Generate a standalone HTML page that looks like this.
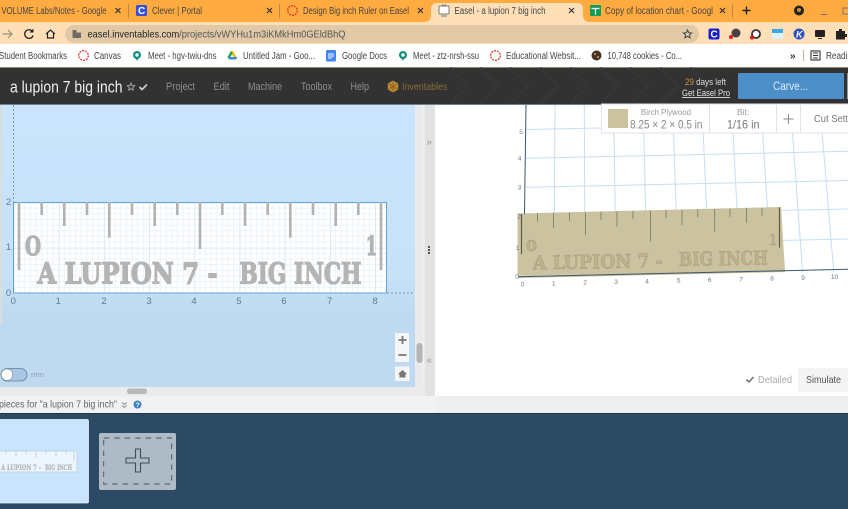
<!DOCTYPE html>
<html><head><meta charset="utf-8"><style>
html,body{margin:0;padding:0;width:848px;height:509px;overflow:hidden;background:#fff}
svg{display:block;font-family:"Liberation Sans",sans-serif;filter:blur(.3px)}
.t{font-size:9.8px;fill:#444}
.x{stroke:#333;stroke-width:1.2;fill:none}
.n{font-size:9.500px;fill:#5d7b98}
.g{stroke:#c8def2;stroke-width:1;fill:none}
.m{font-size:10.800px;fill:#8e8e8e}
.r{font-family:"DejaVu Serif","Liberation Serif",serif;font-weight:bold;fill:#b4b4b4;stroke:#b4b4b4;stroke-width:1.300}
</style></head><body>
<svg width="848" height="509" viewBox="0 0 848 509" xmlns="http://www.w3.org/2000/svg">
<defs>
<pattern id="gr" x="13.5" y="202.5" width="45.2" height="45.2" patternUnits="userSpaceOnUse">
<rect width="45.2" height="45.2" fill="#fff"/>
<path d="M5.65 0V45.2M11.3 0V45.2M16.95 0V45.2M22.6 0V45.2M28.25 0V45.2M33.9 0V45.2M39.55 0V45.2M0 5.65H45.2M0 11.3H45.2M0 16.95H45.2M0 22.6H45.2M0 28.25H45.2M0 33.9H45.2M0 39.55H45.2" stroke="#e8f1f9" stroke-width=".8" fill="none"/>
<path d="M.4 0V45.2M0 .4H45.2" stroke="#d6e7f6" stroke-width="1" fill="none"/>
</pattern>
<linearGradient id="bg" x1="0" y1="0" x2="0" y2="1"><stop offset="0" stop-color="#c9e4fc"/><stop offset=".6" stop-color="#c7e1f9"/><stop offset=".75" stop-color="#bfd9f1"/><stop offset="1" stop-color="#bfd9f1"/></linearGradient>
</defs>

<!-- chrome tabs -->
<rect width="848" height="23" fill="#ffab40"/>
<rect y="22" width="848" height="22" fill="#ffdfb8"/>
<path d="M424 22q7 0 7-7V9q0-6 6-6H577q6 0 6 6v6q0 7 7 7Z" fill="#ffdfb8"/>
<text class="t" x="1.5" y="13.8" textLength="105" lengthAdjust="spacingAndGlyphs">VOLUME Labs/Notes - Google</text>
<path class="x" d="M115.5 8l5 5m0-5l-5 5"/>
<rect x="128" y="4" width="1" height="14" fill="#b98a45"/>
<rect x="136" y="5" width="11" height="11" rx="1.5" fill="#3452e1"/>
<text x="138" y="14.2" font-size="10" font-weight="bold" fill="#fff">C</text>
<text class="t" x="152" y="13.8" textLength="50" lengthAdjust="spacingAndGlyphs">Clever | Portal</text>
<path class="x" d="M267 8l5 5m0-5l-5 5"/>
<rect x="279" y="4" width="1" height="14" fill="#b98a45"/>
<circle cx="292.500" cy="10.500" r="4.800" fill="none" stroke="#e4332d" stroke-width="1.300" stroke-dasharray="2 1"/>
<text class="t" x="303" y="13.800" textLength="106" lengthAdjust="spacingAndGlyphs">Design Big inch Ruler on Easel</text>
<path class="x" d="M418 8l5 5m0-5l-5 5"/>
<rect x="439" y="6" width="10" height="8" rx="1" fill="#fff" stroke="#777" stroke-width="1"/>
<path d="M441 16h6M442 4.500l2 1.500 2-1.500" stroke="#777" stroke-width="1" fill="none"/>
<text class="t" x="454.500" y="13.800" textLength="91" lengthAdjust="spacingAndGlyphs">Easel - a lupion 7 big inch</text>
<path class="x" d="M569 8l5 5m0-5l-5 5"/>
<rect x="590" y="5" width="11" height="11" rx="1" fill="#0f9d58"/>
<path d="M591.500 8.500h8M595.500 8.500v6" stroke="#fff" stroke-width="1.200"/>
<text class="t" x="605" y="13.800" textLength="108" lengthAdjust="spacingAndGlyphs">Copy of location chart - Googl</text>
<path class="x" d="M720 8l5 5m0-5l-5 5"/>
<rect x="732" y="4" width="1" height="14" fill="#b98a45"/>
<path d="M746.500 6.500v8M742.500 10.500h8" stroke="#222" stroke-width="1.400"/>
<circle cx="799" cy="10.500" r="5" fill="#222"/><circle cx="799" cy="10" r="2" fill="#c9913d"/>
<rect x="821" y="14" width="6" height="1" fill="#777"/>
<rect x="843" y="8" width="6" height="6" fill="none" stroke="#777"/>

<!-- toolbar -->
<path d="M2.500 34h9M8 30l4 4-4 4" stroke="#9a8f80" stroke-width="1.200" fill="none"/>
<path d="M32.500 31.500a4.300 4.300 0 1 0 .6 4" stroke="#222" stroke-width="1.300" fill="none"/><path d="M33.500 28.500v4h-4z" fill="#222"/>
<path d="M46 34l4.500-4 4.500 4M47.500 33v5h6v-5" stroke="#222" stroke-width="1.200" fill="none"/>
<rect x="65" y="25" width="634" height="18" rx="9" fill="#e1c9a7"/>
<path d="M72.500 30h4v8h-4zM76.500 32.500h4.500v5.500h-4.500z" fill="#6f6a62"/>
<text x="87.500" y="37.500" font-size="10.400" fill="#555" textLength="258" lengthAdjust="spacingAndGlyphs"><tspan fill="#222">easel.inventables.com</tspan>/projects/vWYHu1m3iKMkHm0GEldBhQ</text>
<path d="M687.500 30l1.200 2.700 2.900.3-2.200 1.900.7 2.900-2.600-1.500-2.600 1.500.7-2.900-2.200-1.900 2.900-.3z" fill="none" stroke="#444" stroke-width="1"/>
<rect x="708.500" y="28.500" width="11" height="11" rx="2" fill="#1a1fd0"/><text x="710.500" y="37.700" font-size="10" font-weight="bold" fill="#fff">C</text>
<circle cx="736" cy="33" r="4.500" fill="#4a4146"/><circle cx="731" cy="37" r="2" fill="#e8141c"/>
<circle cx="756" cy="34" r="4" fill="#fff" stroke="#333" stroke-width="1.800"/><circle cx="752" cy="37.500" r="2" fill="#e8141c"/>
<rect x="772" y="29" width="11" height="10" fill="#38a9ea"/><rect x="772" y="33" width="11" height="6" fill="#dff1fb"/>
<circle cx="799" cy="34" r="5.500" fill="#2b4fc4"/><text x="796" y="37.500" font-size="9" font-weight="bold" font-style="italic" fill="#fff">K</text>
<rect x="815" y="30" width="10" height="7" rx="1" fill="#222"/><path d="M818 38.500h4" stroke="#222" stroke-width="1"/>
<path d="M836 31h3v-2h3v2h3v3h2v3h-2v2.500h-9z" fill="#222"/>

<!-- bookmarks -->
<text class="t" x="-1" y="58.800" textLength="68" lengthAdjust="spacingAndGlyphs">Student Bookmarks</text>
<circle cx="83.500" cy="55.500" r="4.800" fill="none" stroke="#e4332d" stroke-width="1.300" stroke-dasharray="2 1"/>
<text class="t" x="94" y="58.800" textLength="27" lengthAdjust="spacingAndGlyphs">Canvas</text>
<circle cx="137" cy="55" r="4" fill="#0e8f80"/><circle cx="137" cy="55" r="1.700" fill="#fff"/><path d="M135.500 58l1.500 3 1.500-3z" fill="#0e8f80"/>
<text class="t" x="148" y="58.800" textLength="68.500" lengthAdjust="spacingAndGlyphs">Meet - hgv-twiu-dns</text>
<path d="M230 51l3 0 3.500 6-1.500 2.500z" fill="#fbbc04"/><path d="M231 51l-3.500 6 1.500 2.500 3.500-6z" fill="#1fa463"/><path d="M229 59.500h7l1.500-2.500h-7z" fill="#4285f4"/>
<text class="t" x="243" y="58.800" textLength="72" lengthAdjust="spacingAndGlyphs">Untitled Jam - Goo...</text>
<rect x="326" y="50" width="10" height="11.500" rx="1" fill="#4285f4"/><path d="M328 54h6M328 56h6M328 58h4" stroke="#fff" stroke-width="1"/>
<text class="t" x="342" y="58.800" textLength="45" lengthAdjust="spacingAndGlyphs">Google Docs</text>
<circle cx="403" cy="55" r="4" fill="#0e8f80"/><circle cx="403" cy="55" r="1.700" fill="#fff"/><path d="M401.500 58l1.500 3 1.500-3z" fill="#0e8f80"/>
<text class="t" x="413" y="58.800" textLength="66" lengthAdjust="spacingAndGlyphs">Meet - ztz-nrsh-ssu</text>
<circle cx="495.500" cy="55.500" r="4.800" fill="none" stroke="#e4332d" stroke-width="1.300" stroke-dasharray="2 1"/>
<text class="t" x="506" y="58.800" textLength="75" lengthAdjust="spacingAndGlyphs">Educational Websit...</text>
<circle cx="596.500" cy="55.500" r="5" fill="#4b3322"/><circle cx="595" cy="54" r="1" fill="#d2a679"/><circle cx="598" cy="57" r="1" fill="#d2a679"/>
<text class="t" x="607.500" y="58.800" textLength="74.500" lengthAdjust="spacingAndGlyphs">10,748 cookies - Co...</text>
<text x="790" y="59" font-size="10" font-weight="bold" fill="#333">»</text>
<rect x="803" y="50" width="1" height="11" fill="#c9b391"/>
<rect x="811" y="51" width="9" height="9" fill="none" stroke="#333" stroke-width="1.100"/><path d="M813 53h5M813 55.500h5M813 58h5" stroke="#333" stroke-width=".9"/>
<text class="t" x="826" y="58.800" textLength="26" lengthAdjust="spacingAndGlyphs">Readin</text>

<!-- app header -->
<rect y="67" width="848" height="1" fill="#8d8578"/>
<rect y="68" width="848" height="36" fill="#323232"/>
<path d="M450 68l18 18-18 18M480 68l18 18-18 18M510 68l18 18-18 18M540 68l18 18-18 18M570 68l18 18-18 18M600 68l18 18-18 18M630 68l18 18-18 18M660 68l18 18-18 18M690 68l18 18-18 18" stroke="#363636" stroke-width="3" fill="none"/>
<text x="10" y="92.500" font-size="16.500" fill="#f0f0f0" textLength="112.500" lengthAdjust="spacingAndGlyphs">a lupion 7 big inch</text>
<path d="M131 83l1 2.500 2.700.2-2 1.800.6 2.600-2.300-1.400-2.300 1.400.6-2.600-2-1.800 2.700-.2z" fill="none" stroke="#aaa" stroke-width=".9"/>
<path d="M139.500 87l2.500 2.500 5-5" fill="none" stroke="#ccc" stroke-width="1.700"/>
<text class="m" x="166" y="90" textLength="29" lengthAdjust="spacingAndGlyphs">Project</text>
<text class="m" x="213.500" y="90" textLength="16" lengthAdjust="spacingAndGlyphs">Edit</text>
<text class="m" x="248" y="90" textLength="34" lengthAdjust="spacingAndGlyphs">Machine</text>
<text class="m" x="301" y="90" textLength="31" lengthAdjust="spacingAndGlyphs">Toolbox</text>
<text class="m" x="350.500" y="90" textLength="18.500" lengthAdjust="spacingAndGlyphs">Help</text>
<path d="M393 81l4.800 2.800v5.400l-4.800 2.800-4.800-2.800v-5.400z" fill="#b5842d" stroke="#d09a3b" stroke-width=".8"/><path d="M393 81v11M388.500 84l9 5M397.500 84l-9 5" stroke="#7b5a20" stroke-width=".6"/>
<text x="402" y="90" font-size="10.500" fill="#8a6c38" textLength="45.500" lengthAdjust="spacingAndGlyphs">Inventables</text>
<text x="685" y="85" font-size="8.800" fill="#ddd" textLength="41" lengthAdjust="spacingAndGlyphs"><tspan fill="#d09a3b">29</tspan> days left</text>
<text x="682" y="96" font-size="8.800" fill="#e4e4e4" text-decoration="underline" textLength="48" lengthAdjust="spacingAndGlyphs">Get Easel Pro</text>
<rect x="738" y="73" width="106" height="26" rx="1" fill="#4b8ec8"/>
<text x="773" y="90" font-size="11.500" fill="#dcebf7" textLength="35" lengthAdjust="spacingAndGlyphs">Carve...</text>
<rect x="847" y="73" width="1" height="26" fill="#999"/>
<rect y="104" width="848" height="1" fill="#6d8193"/>

<!-- left 2D panel -->
<rect x="0" y="105" width="415" height="282" fill="url(#bg)"/>
<rect x="0" y="105" width="2" height="218" fill="#dcdcdc"/>
<rect x="415" y="105" width="9" height="282" fill="#ebebed"/>
<rect x="424" y="105" width="11" height="291" fill="#e2e2e2"/>
<rect x="423.500" y="105" width="1" height="291" fill="#f4f4f4"/>
<rect x="0" y="387" width="424" height="9" fill="#ebebed"/>
<path d="M13.500 105V202" stroke="#6d9cc6" stroke-width="1" stroke-dasharray="2 2"/>
<path d="M387 293H415" stroke="#6d9cc6" stroke-width="1" stroke-dasharray="2 2"/>
<rect x="13.500" y="202.500" width="373" height="90.500" fill="url(#gr)" stroke="#63a3da" stroke-width="1"/>
<path d="M19 202v68M41.700 202v13M64.300 202v24M87 202v13M109.300 202v35.500M132 202v13M154.700 202v24M177.300 202v13M200 202v47M222.300 202v13M245 202v24M267.700 202v13M290.300 202v35.500M313 202v13M335.700 202v24M358.300 202v13M381 202v68" stroke="#b3b3b3" stroke-width="2.700" fill="none"/>
<text class="r" x="25" y="255" font-size="26" textLength="16" lengthAdjust="spacingAndGlyphs">O</text>
<text class="r" x="366" y="255" font-size="26" textLength="11" lengthAdjust="spacingAndGlyphs">1</text>
<text class="r" x="37.500" y="283.500" font-size="29" textLength="180" lengthAdjust="spacingAndGlyphs">A LUPION 7 -</text>
<text class="r" x="239.500" y="283.500" font-size="29" textLength="122" lengthAdjust="spacingAndGlyphs">BIG INCH</text>
<g class="n" text-anchor="middle">
<text x="13.300" y="304">0</text><text x="58.300" y="304">1</text><text x="104" y="304">2</text><text x="149" y="304">3</text><text x="194" y="304">4</text><text x="239" y="304">5</text><text x="284" y="304">6</text><text x="329.700" y="304">7</text><text x="375" y="304">8</text>
<text x="8.500" y="205">2</text><text x="8.500" y="250">1</text><text x="8.500" y="296">0</text>
</g>
<rect x="428" y="246" width="2" height="2" fill="#555"/><rect x="428" y="249" width="2" height="2" fill="#555"/><rect x="428" y="252" width="2" height="2" fill="#555"/>
<text x="426.500" y="145" font-size="10" fill="#999">»</text>
<text x="426.500" y="363" font-size="10" fill="#999">«</text>
<rect x="416.500" y="343" width="6" height="20" rx="3" fill="#b5b5b5"/>
<rect x="127" y="388.500" width="20" height="5.500" rx="2.700" fill="#b8b8b8"/>
<rect x="395" y="333" width="14" height="29" fill="#f4f6f8"/>
<path d="M398.500 340h8M402.500 336v8M398.500 355h8" stroke="#777" stroke-width="1.800"/>
<rect x="395" y="366.500" width="14.500" height="14.500" fill="#f4f6f8"/>
<path d="M402.500 370l-4.500 4h1.500v3.500h6V374h1.500z" fill="#777"/>
<rect x="1" y="368.500" width="26" height="12.500" rx="6.200" fill="#a9c7e2" stroke="#5f7f9e" stroke-width=".8"/>
<circle cx="7" cy="374.700" r="5.800" fill="#fff" stroke="#6a7f92" stroke-width=".6"/>
<text x="31" y="377" font-size="7.500" fill="#8fa0ae" textLength="13" lengthAdjust="spacingAndGlyphs">mm</text>

<!-- right 3D view -->
<path d="M555 105L553.800 272M584.300 105L584.900 272M613.700 105L616 272M643.200 105L647.100 272M672.600 105L678.200 272M702 105L709.300 272M731.500 105L740.400 272M760.900 105L771.500 272M790.400 105L802.600 272M819.800 105L833.700 272M849 105L864.800 272" class="g"/>
<path d="M526 129.500L848 123M526 158.300L848 151.300M526 187.300L848 180.500M526 216L848 209M526 246L848 239" class="g"/>
<polygon points="517.500,213.500 781,207 785,270.700 517.500,275.700" fill="#cbc2a0"/>
<path d="M518 277L785 271" stroke="#c4b993" stroke-width="2"/>
<path d="M526 105L524.500 214M518 276.700L848 269.300" stroke="#3c5870" stroke-width="1" fill="none"/>
<g stroke="#7d7661" fill="none" stroke-width=".8">
<path d="M521.500 214v40" stroke-width="1.200" stroke="#5f5948"/><path d="M537.500 213.500v8M553.500 213v15M569.500 212.700v8M585.500 212.300v23M601 212v8M617 211.500v15M633 211v8M650.500 210.500v31M666 210v8M682 210v15M697.800 209.500v8M714.700 209v23M730 208.700v8M746.500 208v15M762 208v8"/><path d="M779.500 207.500v40" stroke-width="1.200" stroke="#5f5948"/>
</g>
<g font-family="'DejaVu Serif','Liberation Serif',serif" font-weight="bold" fill="#bcb28e" stroke="#a59c7c" stroke-width=".5">
<text x="526" y="251" font-size="15" textLength="11" lengthAdjust="spacingAndGlyphs">0</text>
<text x="769" y="245" font-size="15" textLength="8" lengthAdjust="spacingAndGlyphs">1</text>
<text x="533" y="269.500" font-size="19" textLength="130" lengthAdjust="spacingAndGlyphs" transform="rotate(-1 533 269)">A LUPION 7 -</text>
<text x="679" y="266" font-size="19" textLength="89" lengthAdjust="spacingAndGlyphs" transform="rotate(-1 679 266)">BIG INCH</text>
</g>
<g font-size="6.500" fill="#66798a" text-anchor="middle">
<text x="521" y="134">5</text><text x="519.500" y="160.500">4</text><text x="519.500" y="189.500">3</text><text x="519" y="218.500">2</text><text x="517.500" y="250">1</text><text x="517" y="279">0</text>
<text x="522.700" y="286.500">0</text><text x="553.700" y="285.500">1</text><text x="585" y="284.500">2</text><text x="616" y="284">3</text><text x="647" y="283.500">4</text><text x="678.700" y="282.500">5</text><text x="709.700" y="282">6</text><text x="741" y="281.500">7</text><text x="772" y="280.500">8</text><text x="803" y="280">9</text><text x="834.500" y="279">10</text>
</g>
<!-- material toolbar -->
<rect x="601.500" y="104" width="247" height="29" fill="#fff" stroke="#e2e2e2"/>
<rect x="608" y="109" width="20" height="19" fill="#cbc2a0"/>
<text x="641" y="115" font-size="8.500" fill="#999" textLength="50" lengthAdjust="spacingAndGlyphs">Birch Plywood</text>
<text x="630" y="128.500" font-size="12" fill="#888" textLength="72.500" lengthAdjust="spacingAndGlyphs">8.25 × 2 × 0.5 in</text>
<path d="M709.500 105v28M776.500 105v28M800.500 105v28" stroke="#e2e2e2"/>
<text x="737" y="115" font-size="8.500" fill="#999" textLength="12" lengthAdjust="spacingAndGlyphs">Bit:</text>
<text x="727" y="128.500" font-size="12" fill="#777" textLength="32.500" lengthAdjust="spacingAndGlyphs">1/16 in</text>
<path d="M783.500 119h10M788.500 114v10" stroke="#888" stroke-width="1"/>
<text x="814" y="122" font-size="10.500" fill="#777" textLength="36" lengthAdjust="spacingAndGlyphs">Cut Setti</text>
<path d="M746.500 379.500l2.500 2.500 4.500-5" fill="none" stroke="#777" stroke-width="1.600"/>
<text x="758" y="382.800" font-size="10.500" fill="#aaa" textLength="34" lengthAdjust="spacingAndGlyphs">Detailed</text>
<rect x="798" y="368" width="50" height="24" fill="#f4f4f4"/>
<text x="806" y="383" font-size="10.500" fill="#555" textLength="35" lengthAdjust="spacingAndGlyphs">Simulate</text>

<!-- bottom -->
<rect x="435" y="396" width="413" height="17" fill="#efefef"/>
<rect x="0" y="396" width="435" height="17" fill="#f2f2f2"/>
<text y="407.500" x="-1" font-size="10.500" fill="#666" textLength="118" lengthAdjust="spacingAndGlyphs">pieces for "a lupion 7 big inch"</text>
<path d="M122 402.500l2.300 2 2.300-2M122 405.500l2.300 2 2.300-2" fill="none" stroke="#888" stroke-width=".9"/>
<circle cx="137.500" cy="404.500" r="4" fill="#3d83c6"/><text x="135.700" y="407" font-size="6.500" font-weight="bold" fill="#fff">?</text>
<rect y="413" width="848" height="96" fill="#2c4a64"/>
<rect y="413" width="848" height="1" fill="#1e3549"/>
<rect x="-4" y="419.500" width="92.500" height="83.500" rx="1.500" fill="#c9e4fc" stroke="#e4f1fc" stroke-width=".8"/>
<rect x="-2" y="451" width="79" height="21" fill="#eef6fd" stroke="#b7cfe2" stroke-width=".8"/>
<path d="M6 451v3M16 451v5M26 451v3M36 451v7M46 451v3M56 451v5M66 451v3M74 451v10" stroke="#c0c8ce" stroke-width=".8"/>
<text x="1" y="470" font-family="'DejaVu Serif','Liberation Serif',serif" font-weight="bold" font-size="7" fill="#b4babf" stroke="#b4babf" stroke-width=".3" textLength="40" lengthAdjust="spacingAndGlyphs">A LUPION 7 -</text>
<text x="45" y="470" font-family="'DejaVu Serif','Liberation Serif',serif" font-weight="bold" font-size="7" fill="#b4babf" stroke="#b4babf" stroke-width=".3" textLength="27" lengthAdjust="spacingAndGlyphs">BIG INCH</text>
<rect x="99" y="433" width="77" height="57" rx="2" fill="#aebac5"/>
<rect x="103.700" y="438" width="68" height="46" fill="none" stroke="#44566a" stroke-width=".9" stroke-dasharray="5.500 5"/>
<path d="M135.500 449.500h5v9h8.500v5h-8.500v9h-5v-9h-9.500v-5h9.500z" fill="#aebac5" stroke="#3d4f5f" stroke-width="1.100" transform="translate(0 -.5)"/>
</svg>
</body></html>
